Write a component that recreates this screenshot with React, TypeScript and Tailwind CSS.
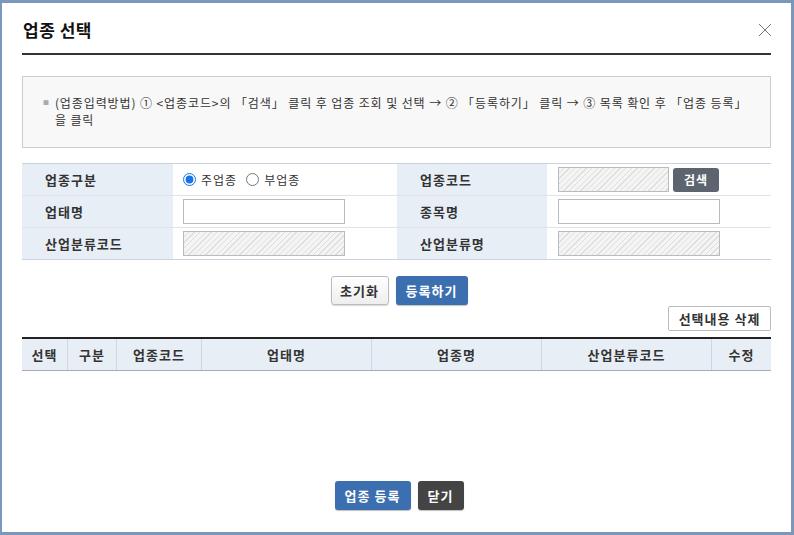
import React, { useState } from 'react';

const hatch =
  'bg-[repeating-linear-gradient(135deg,#f4f4f4_0px,#f4f4f4_3px,#dedede_3px,#dedede_4px)]';

const columns = [
  { label: '선택', w: 'w-[46px]' },
  { label: '구분', w: 'w-[49px]' },
  { label: '업종코드', w: 'w-[85px]' },
  { label: '업태명', w: 'w-[170px]' },
  { label: '업종명', w: 'w-[170px]' },
  { label: '산업분류코드', w: 'w-[170px]' },
  { label: '수정', w: 'flex-1' },
];

const App: React.FC = () => {
  const [kind, setKind] = useState<'main' | 'sub'>('main');
  const [bizName, setBizName] = useState('');
  const [itemName, setItemName] = useState('');

  return (
    <div
      className="w-[794px] h-[535px] bg-[#7b97bc] pt-[3px] pl-[2px] pr-[3px] pb-[3px] text-[#333] tracking-[1px]"
      style={{ fontFamily: '"Noto Sans CJK KR", "Noto Sans", sans-serif' }}
    >
      <div className="bg-white h-full flex flex-col px-[20px]">
        {/* header */}
        <div className="flex items-center justify-between h-[52px] pt-[4px] border-b-2 border-[#333]">
          <h1 className="text-[17px] font-bold text-[#111] pl-[1px] tracking-[0.5px]">업종 선택</h1>
          <button className="w-[16px] h-[16px] mr-[-2px] text-[#777]">
            <svg viewBox="0 0 16 16" className="w-full h-full" stroke="currentColor" strokeWidth="1">
              <path d="M2 2L14 14M14 2L2 14" />
            </svg>
          </button>
        </div>

        {/* info box */}
        <div className="mt-[21px] h-[72px] border border-[#ccc] bg-[#f8f8f8] px-[20px] pt-[17px] text-[12px] leading-[17px] text-[#333] tracking-[0.9px]">
          <div className="flex">
            <span className="text-[#aaa] mr-[5px] text-[6px] leading-[17px]">■</span>
            <p>
              (업종입력방법) ① &lt;업종코드&gt;의 「검색」 클릭 후 업종 조회 및 선택 → ② 「등록하기」 클릭 → ③ 목록 확인 후 「업종 등록」
              <br />을 클릭
            </p>
          </div>
        </div>

        {/* form */}
        <div className="mt-[15px] border-t border-[#c9d3df] text-[13px]">
          <div className="flex h-[32px] border-b border-[#dde3ea]">
            <div className="w-[151px] bg-[#e8eef6] font-bold flex items-center pl-[23px]">업종구분</div>
            <div className="w-[224px] flex items-center pl-[10px] gap-[4px] text-[12px]">
              <label className="flex items-center gap-[5px]">
                <input
                  type="radio"
                  checked={kind === 'main'}
                  onChange={() => setKind('main')}
                  className="w-[13px] h-[13px] accent-[#1a73e8]"
                />
                주업종
              </label>
              <label className="flex items-center gap-[5px] ml-[5px]">
                <input
                  type="radio"
                  checked={kind === 'sub'}
                  onChange={() => setKind('sub')}
                  className="w-[13px] h-[13px] accent-[#1a73e8]"
                />
                부업종
              </label>
            </div>
            <div className="w-[150px] bg-[#e8eef6] font-bold flex items-center pl-[23px]">업종코드</div>
            <div className="flex-1 flex items-center pl-[11px] gap-[4px]">
              <div className={`w-[111px] h-[25px] border border-[#bbb] ${hatch}`} />
              <button className="w-[46px] h-[24px] rounded-[3px] bg-[#5d6470] text-white font-bold text-[12px]">
                검색
              </button>
            </div>
          </div>
          <div className="flex h-[32px] border-b border-[#dde3ea]">
            <div className="w-[151px] bg-[#e8eef6] font-bold flex items-center pl-[23px]">업태명</div>
            <div className="w-[224px] flex items-center pl-[10px]">
              <input
                value={bizName}
                onChange={(e) => setBizName(e.target.value)}
                className="w-[162px] h-[25px] border border-[#bbb] outline-none px-1 text-[12px]"
              />
            </div>
            <div className="w-[150px] bg-[#e8eef6] font-bold flex items-center pl-[23px]">종목명</div>
            <div className="flex-1 flex items-center pl-[11px]">
              <input
                value={itemName}
                onChange={(e) => setItemName(e.target.value)}
                className="w-[162px] h-[25px] border border-[#bbb] outline-none px-1 text-[12px]"
              />
            </div>
          </div>
          <div className="flex h-[32px] border-b border-[#c9d3df]">
            <div className="w-[151px] bg-[#e8eef6] font-bold flex items-center pl-[23px]">산업분류코드</div>
            <div className="w-[224px] flex items-center pl-[10px]">
              <div className={`w-[162px] h-[25px] border border-[#bbb] ${hatch}`} />
            </div>
            <div className="w-[150px] bg-[#e8eef6] font-bold flex items-center pl-[23px]">산업분류명</div>
            <div className="flex-1 flex items-center pl-[11px]">
              <div className={`w-[162px] h-[25px] border border-[#bbb] ${hatch}`} />
            </div>
          </div>
        </div>

        {/* action buttons */}
        <div className="flex justify-center gap-[7px] mt-[16px] text-[13px] font-bold">
          <button className="w-[58px] h-[29px] rounded-[3px] border border-[#bbb] bg-gradient-to-b from-white to-[#eee] text-[#333] shadow-[0_1px_1px_rgba(0,0,0,0.15)] ml-[5px]">
            초기화
          </button>
          <button className="w-[72px] h-[29px] rounded-[3px] bg-[#3c6fb0] text-white shadow-[0_1px_1px_rgba(0,0,0,0.25)]">
            등록하기
          </button>
        </div>

        <div className="flex justify-end mt-[1px]">
          <button className="w-[103px] h-[25px] border border-[#bbb] rounded-[2px] bg-white text-[13px] font-bold text-[#333]">
            선택내용 삭제
          </button>
        </div>

        {/* list table */}
        <div className="mt-[6px] border-t-2 border-[#222] border-b border-b-[#aab] flex h-[34px] bg-[#e8eef6] text-[13px] font-bold">
          {columns.map((c, i) => (
            <div
              key={c.label}
              className={`${c.w} flex items-center justify-center ${i < columns.length - 1 ? 'border-r border-[#cfd6e0]' : ''}`}
            >
              {c.label}
            </div>
          ))}
        </div>

        <div className="flex-1" />

        {/* footer */}
        <div className="flex justify-center gap-[7px] pb-[22px] text-[13px] font-bold text-white">
          <button className="w-[76px] h-[29px] rounded-[3px] bg-[#3c6fb0] shadow-[0_1px_1px_rgba(0,0,0,0.25)] ml-[5px]">
            업종 등록
          </button>
          <button className="w-[46px] h-[29px] rounded-[3px] bg-[#444] shadow-[0_1px_1px_rgba(0,0,0,0.25)]">
            닫기
          </button>
        </div>
      </div>
    </div>
  );
};

export default App;
